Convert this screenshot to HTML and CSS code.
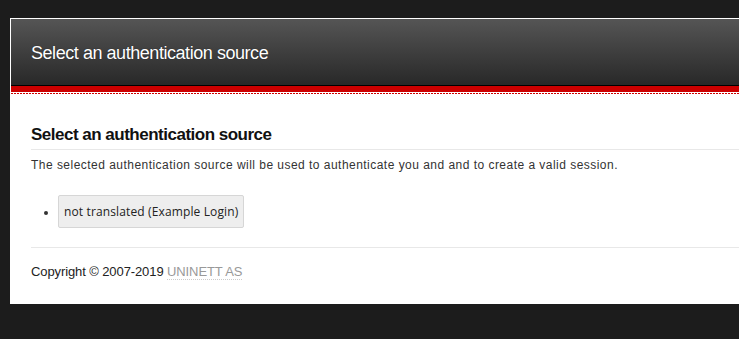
FILE: index.html
```html
<!DOCTYPE html>
<html>
<head>
<meta charset="utf-8">
<title>Select an authentication source</title>
<link rel="stylesheet" href="styles.css">
</head>
<body>
<div class="wrap">
  <div class="header">
    <h1 class="title">Select an authentication source</h1>
  </div>
  <div class="redbar"></div>
  <div class="dots"></div>
  <div class="content">
    <h2 class="heading">Select an authentication source</h2>
    <p class="lead">The selected authentication source will be used to authenticate you and and to create a valid session.</p>
    <ul class="sources">
      <li><button class="btn">not translated (Example Login)</button></li>
    </ul>
    <div class="footer">Copyright © 2007-2019 <a class="link" href="#">UNINETT AS</a></div>
  </div>
</div>
</body>
</html>
```

FILE: styles.css
```css
html, body {
  margin: 0;
  padding: 0;
  background: #1c1c1c;
  font-family: "Liberation Sans", Arial, sans-serif;
}
body {
  padding: 18px 0 0 10px;
  overflow: hidden;
  height: 339px;
  box-sizing: border-box;
}
.wrap {
  background: #fff;
  border-top: 1px solid #fff;
  border-left: 1px solid #fff;
  width: 760px;
  height: 285px;
}
.header {
  background: linear-gradient(#555555, #282828);
  border-bottom: 1px solid #000;
  display: flex;
  align-items: center;
  padding: 3px 0 0 20px;
  box-sizing: border-box;
  height: 67px;
}
.title {
  margin: 0;
  color: #fff;
  font-size: 18px;
  font-weight: normal;
  letter-spacing: -0.45px;
  text-shadow: 0 0 1px rgba(0,0,0,0.6);
}
.redbar {
  height: 6px;
  background: #cc0000;
}
.dots {
  height: 1px;
  margin-top: 1px;
  background: repeating-linear-gradient(90deg, #cc0000 0 2px, #fff 2px 3px);
}
.content {
  padding: 0 0 0 20px;
}
.heading {
  margin: 0;
  padding: 31px 0 4px;
  font-size: 17px;
  letter-spacing: -0.5px;
  color: #111;
  border-bottom: 1px solid #e8e8e8;
}
.lead {
  margin: 8px 0 0;
  font-size: 12px;
  letter-spacing: 0.47px;
  color: #333;
}
.sources {
  margin: 23px 0 0;
  padding-left: 27px;
  list-style: disc;
  font-size: 12px;
  color: #333;
}
.btn {
  font-family: "Open Sans", "Liberation Sans", sans-serif;
  font-size: 12px;
  letter-spacing: 0.13px;
  color: #222;
  background: #eeeeee;
  border: 1px solid #d6d6d6;
  border-radius: 2px;
  padding: 7px 5px 7px;
  margin: 0;
}
.footer {
  margin-top: 19px;
  border-top: 1px solid #e8e8e8;
  padding-top: 16px;
  font-size: 13px;
  color: #222;
  letter-spacing: -0.1px;
}
.link {
  color: #999;
  text-decoration: none;
  border-bottom: 1px dotted #ccc;
}
```
